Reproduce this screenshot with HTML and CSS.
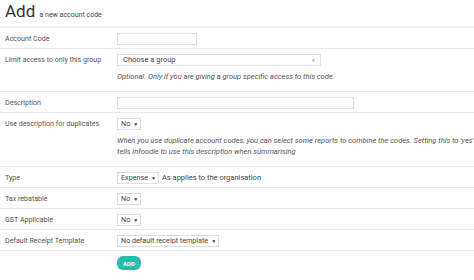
FILE: index.html
```html
<!DOCTYPE html>
<html lang="en">

<head>
    <meta charset="UTF-8">
    <title>Add account code</title>
    <link rel="stylesheet" href="styles.css">
</head>

<body>
    <h1 class="page-title">Add <small>a new account code</small></h1>
    <form class="code-form">
        <div class="form-row">
            <label class="form-label">Account Code</label>
            <div class="form-field">
                <input type="text" class="text-input short">
            </div>
        </div>
        <div class="form-row">
            <label class="form-label">Limit access to only this group</label>
            <div class="form-field">
                <div class="select-box group-select">Choose a group <span class="caret caret-light">&#9662;</span></div>
                <p class="help">Optional. Only if you are giving a group specific access to this code.</p>
            </div>
        </div>
        <div class="form-row">
            <label class="form-label">Description</label>
            <div class="form-field">
                <input type="text" class="text-input long">
            </div>
        </div>
        <div class="form-row">
            <label class="form-label">Use description for duplicates</label>
            <div class="form-field">
                <div class="select-box">No <span class="caret">&#9660;</span></div>
                <p class="help">When you use duplicate account codes, you can select some reports to combine the codes. Setting this to 'yes' tells infoodle to use this description when summarising</p>
            </div>
        </div>
        <div class="form-row">
            <label class="form-label">Type</label>
            <div class="form-field inline">
                <div class="select-box">Expense <span class="caret">&#9660;</span></div>
                <span class="note">As applies to the organisation</span>
            </div>
        </div>
        <div class="form-row">
            <label class="form-label">Tax rebatable</label>
            <div class="form-field">
                <div class="select-box">No <span class="caret">&#9660;</span></div>
            </div>
        </div>
        <div class="form-row">
            <label class="form-label">GST Applicable</label>
            <div class="form-field">
                <div class="select-box">No <span class="caret">&#9660;</span></div>
            </div>
        </div>
        <div class="form-row">
            <label class="form-label">Default Receipt Template</label>
            <div class="form-field">
                <div class="select-box">No default receipt template <span class="caret">&#9660;</span></div>
            </div>
        </div>
        <div class="form-actions">
            <button type="button" class="btn-add">ADD</button>
        </div>
    </form>
</body>

</html>
```

FILE: styles.css
```css
body {
    font-family: Roboto, "Liberation Sans", sans-serif;
    background-color: #fff;
    color: #555;
    margin: 0;
    padding: 0;
}

.page-title {
    font-size: 17px;
    font-weight: 400;
    color: #333;
    margin: 0;
    padding: 2px 5px 0;
    height: 24px;
    line-height: 18px;
}

.page-title small {
    font-size: 7px;
    color: #444;
}

.code-form {
    border-top: 2px solid #f0f0f0;
}

.form-row {
    display: flex;
    border-bottom: 1px solid #e8e8e8;
}

.form-label {
    width: 112px;
    padding: 6px 0 0 5px;
    font-size: 7.1px;
    line-height: 10px;
}

.form-field {
    flex: 1;
    padding: 5px 0 3px;
    font-size: 7.5px;
    line-height: 12px;
}

.form-field.inline {
    display: flex;
    align-items: center;
}

.text-input {
    display: block;
    height: 12px;
    border: 1px solid #ddd;
    box-sizing: border-box;
    margin: 0;
    padding: 0;
}

.text-input.short {
    width: 80px;
}

.text-input.long {
    width: 237px;
}

.select-box {
    display: flex;
    width: fit-content;
    align-items: center;
    height: 12px;
    padding: 0 2px 0 3px;
    border: 1px solid #ddd;
    box-sizing: border-box;
    font-size: 7.2px;
    color: #444;
    background: #fff;
}

.select-box .caret {
    font-size: 5px;
    margin-left: 3px;
    color: #333;
}

.group-select {
    width: 204px;
    justify-content: space-between;
    padding: 0 5px;
    font-size: 7.5px;
}

.caret-light {
    color: #999 !important;
}

.help {
    margin: 5px 0 6px;
    line-height: 11px;
    font-style: italic;
    color: #555;
}

.note {
    margin-left: 3px;
    color: #444;
}

.form-actions {
    display: flex;
    padding: 5px 0 0 117px;
}

.btn-add {
    background-color: #2bbbad;
    color: #fff;
    border: none;
    border-radius: 6px;
    font-size: 6px;
    font-weight: 700;
    font-family: inherit;
    width: 24px;
    height: 14px;
    padding: 0;
}
```
